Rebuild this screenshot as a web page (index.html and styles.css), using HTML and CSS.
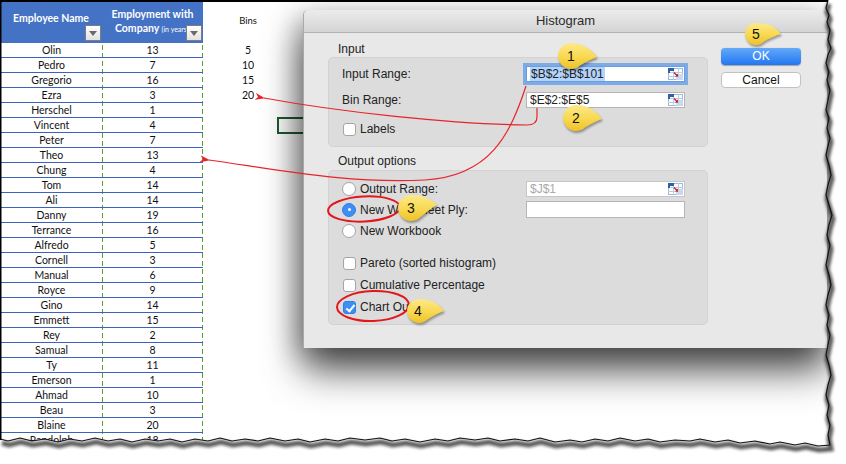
FILE: index.html
```html
<!DOCTYPE html>
<html>
<head>
<meta charset="utf-8">
<link rel="stylesheet" href="styles.css">
</head>
<body>
<div class="shot">
  <div class="sheet">
    <div class="table">
      <div class="thead">
        <div class="th th-name"><span class="hl">Employee Name</span><i class="dd"></i></div>
        <div class="th th-emp"><span class="l1">Employment with</span><span class="l2">Company <small>(in years)</small></span><i class="dd"></i></div>
      </div>
      <div class="tbody">
        <div class="row"><span>Olin</span><span>13</span></div>
        <div class="row"><span>Pedro</span><span>7</span></div>
        <div class="row"><span>Gregorio</span><span>16</span></div>
        <div class="row"><span>Ezra</span><span>3</span></div>
        <div class="row"><span>Herschel</span><span>1</span></div>
        <div class="row"><span>Vincent</span><span>4</span></div>
        <div class="row"><span>Peter</span><span>7</span></div>
        <div class="row"><span>Theo</span><span>13</span></div>
        <div class="row"><span>Chung</span><span>4</span></div>
        <div class="row"><span>Tom</span><span>14</span></div>
        <div class="row"><span>Ali</span><span>14</span></div>
        <div class="row"><span>Danny</span><span>19</span></div>
        <div class="row"><span>Terrance</span><span>16</span></div>
        <div class="row"><span>Alfredo</span><span>5</span></div>
        <div class="row"><span>Cornell</span><span>3</span></div>
        <div class="row"><span>Manual</span><span>6</span></div>
        <div class="row"><span>Royce</span><span>9</span></div>
        <div class="row"><span>Gino</span><span>14</span></div>
        <div class="row"><span>Emmett</span><span>15</span></div>
        <div class="row"><span>Rey</span><span>2</span></div>
        <div class="row"><span>Samual</span><span>8</span></div>
        <div class="row"><span>Ty</span><span>11</span></div>
        <div class="row"><span>Emerson</span><span>1</span></div>
        <div class="row"><span>Ahmad</span><span>10</span></div>
        <div class="row"><span>Beau</span><span>3</span></div>
        <div class="row"><span>Blaine</span><span>20</span></div>
        <div class="row"><span>Randolph</span><span>18</span></div>
      </div>
    </div>
    <div class="bins">
      <div class="cell small">Bins</div>
      <div class="cell"></div>
      <div class="cell">5</div>
      <div class="cell">10</div>
      <div class="cell">15</div>
      <div class="cell">20</div>
    </div>
    <div class="colf"><div class="selcell"></div></div>
  </div>

  <div class="dialog">
    <div class="titlebar">Histogram</div>
    <div class="dbody">
      <div class="dmain">
        <div class="glabel">Input</div>
        <div class="group g-in">
          <div class="frow">
            <span class="lbl">Input Range:</span>
            <div class="field focus"><span class="seltext">$B$2:$B$101</span>
              <svg class="rng" width="15" height="12" viewBox="0 0 15 12"><rect x="0.5" y="0.5" width="14" height="11" fill="#fff" stroke="#9fb8d8"/><path d="M0 4.5H15M0 8.5H15M5.5 0V12M10.5 0V12" stroke="#b9cde6" stroke-width="1"/><rect x="8" y="6" width="7" height="6" fill="#c9daf0"/><rect x="0" y="0" width="6" height="3" fill="#2f5fa8"/><rect x="0" y="0" width="2" height="5" fill="#2f5fa8"/><path d="M6 4.5L9.5 8" stroke="#c3262c" stroke-width="1.4"/><path d="M7 8.6L10.2 8.7L10 5.6Z" fill="#c3262c"/></svg>
            </div>
          </div>
          <div class="frow">
            <span class="lbl">Bin Range:</span>
            <div class="field"><span class="ftext">$E$2:$E$5</span>
              <svg class="rng" width="15" height="12" viewBox="0 0 15 12"><rect x="0.5" y="0.5" width="14" height="11" fill="#fff" stroke="#9fb8d8"/><path d="M0 4.5H15M0 8.5H15M5.5 0V12M10.5 0V12" stroke="#b9cde6" stroke-width="1"/><rect x="8" y="6" width="7" height="6" fill="#c9daf0"/><rect x="0" y="0" width="6" height="3" fill="#2f5fa8"/><rect x="0" y="0" width="2" height="5" fill="#2f5fa8"/><path d="M6 4.5L9.5 8" stroke="#c3262c" stroke-width="1.4"/><path d="M7 8.6L10.2 8.7L10 5.6Z" fill="#c3262c"/></svg>
            </div>
          </div>
          <div class="crow c-labels"><i class="cb"></i><span>Labels</span></div>
        </div>

        <div class="glabel g2">Output options</div>
        <div class="group g-out">
          <div class="frow r1">
            <span class="lbl"><i class="rb"></i>Output Range:</span>
            <div class="field disabled"><span class="ftext">$J$1</span>
              <svg class="rng" width="15" height="12" viewBox="0 0 15 12"><rect x="0.5" y="0.5" width="14" height="11" fill="#fff" stroke="#9fb8d8"/><path d="M0 4.5H15M0 8.5H15M5.5 0V12M10.5 0V12" stroke="#b9cde6" stroke-width="1"/><rect x="8" y="6" width="7" height="6" fill="#c9daf0"/><rect x="0" y="0" width="6" height="3" fill="#2f5fa8"/><rect x="0" y="0" width="2" height="5" fill="#2f5fa8"/><path d="M6 4.5L9.5 8" stroke="#c3262c" stroke-width="1.4"/><path d="M7 8.6L10.2 8.7L10 5.6Z" fill="#c3262c"/></svg>
            </div>
          </div>
          <div class="frow r2">
            <span class="lbl"><i class="rb on"></i>New Worksheet Ply:</span>
            <div class="field tall"></div>
          </div>
          <div class="frow r3">
            <span class="lbl"><i class="rb"></i>New Workbook</span>
          </div>
          <div class="crow r4"><i class="cb"></i><span>Pareto (sorted histogram)</span></div>
          <div class="crow r5"><i class="cb"></i><span>Cumulative Percentage</span></div>
          <div class="crow r6"><i class="cb on"></i><span>Chart Output</span></div>
        </div>
      </div>
      <div class="dbtns">
        <div class="btn ok">OK</div>
        <div class="btn cancel">Cancel</div>
      </div>
    </div>
  </div>

  <svg class="marks" width="846" height="464" viewBox="0 0 846 464">
    <defs>
      <linearGradient id="yel" x1="0" y1="0" x2="0" y2="1">
        <stop offset="0" stop-color="#fde98a"/>
        <stop offset="0.55" stop-color="#f8d84e"/>
        <stop offset="1" stop-color="#eec12a"/>
      </linearGradient>
      <filter id="sh" x="-30%" y="-30%" width="160%" height="160%"><feGaussianBlur stdDeviation="1.2"/></filter>
      <marker id="ah" markerWidth="10" markerHeight="8" refX="1" refY="4" orient="auto-start-reverse" markerUnits="userSpaceOnUse">
        <path d="M0 4L10 0.5L7 4L10 7.5Z" fill="#e8232a"/>
      </marker>
    </defs>
    <path d="M537 108 L537 117 Q537 125 527 125 C450 124 340 112 264 98" fill="none" stroke="#e8232a" stroke-width="1.2" marker-end="url(#ah)"/>
    <path d="M526 86 C510 135 490 176 425 180 C350 184 280 170 209 160" fill="none" stroke="#e8232a" stroke-width="1.2" marker-end="url(#ah)"/>
    <ellipse cx="364" cy="209" rx="36" ry="12.5" transform="rotate(-3 364 209)" fill="none" stroke="#e3161c" stroke-width="2"/>
    <ellipse cx="373" cy="306" rx="36" ry="15" transform="rotate(-2 373 306)" fill="none" stroke="#e3161c" stroke-width="2"/>

    <g class="callout" transform="translate(571 56)">
      <path d="M26 1C20 -7 12 -13 0 -13A13 13 0 1 0 9 9.4C15 6 20 3 26 1Z" fill="#000" opacity="0.35" transform="translate(1 2)" filter="url(#sh)"/>
      <path d="M26 1C20 -7 12 -13 0 -13A13 13 0 1 0 9 9.4C15 6 20 3 26 1Z" fill="url(#yel)"/>
      <text x="0" y="5">1</text>
    </g>
    <g class="callout" transform="translate(576 118)">
      <path d="M26 1C20 -7 12 -13 0 -13A13 13 0 1 0 9 9.4C15 6 20 3 26 1Z" fill="#000" opacity="0.35" transform="translate(1 2)" filter="url(#sh)"/>
      <path d="M26 1C20 -7 12 -13 0 -13A13 13 0 1 0 9 9.4C15 6 20 3 26 1Z" fill="url(#yel)"/>
      <text x="0" y="5">2</text>
    </g>
    <g class="callout" transform="translate(411 208)">
      <path d="M26 -3C20 -9 12 -13 0 -13A13 13 0 1 0 9 9.4C15 5 20 0 26 -3Z" fill="#000" opacity="0.35" transform="translate(1 2)" filter="url(#sh)"/>
      <path d="M26 -3C20 -9 12 -13 0 -13A13 13 0 1 0 9 9.4C15 5 20 0 26 -3Z" fill="url(#yel)"/>
      <text x="0" y="5">3</text>
    </g>
    <g class="callout" transform="translate(419 311)">
      <path d="M25 0C19 -8 12 -12 0 -12A12 12 0 1 0 8.5 8.5C14 5 19 2 25 0Z" fill="#000" opacity="0.35" transform="translate(1 2)" filter="url(#sh)"/>
      <path d="M25 0C19 -8 12 -12 0 -12A12 12 0 1 0 8.5 8.5C14 5 19 2 25 0Z" fill="url(#yel)"/>
      <text x="-1" y="5">4</text>
    </g>
    <g class="callout" transform="translate(756 34)">
      <path d="M25 0C19 -8 12 -11 0 -11A11 11 0 1 0 8 7.5C13 4.5 19 2 25 0Z" fill="#000" opacity="0.35" transform="translate(1 2)" filter="url(#sh)"/>
      <path d="M25 0C19 -8 12 -11 0 -11A11 11 0 1 0 8 7.5C13 4.5 19 2 25 0Z" fill="url(#yel)"/>
      <text x="0" y="5">5</text>
    </g>
  </svg>

  <svg class="torn" width="846" height="464" viewBox="0 0 846 464">
    <defs>
      <filter id="tb" x="-10%" y="-10%" width="120%" height="120%"><feGaussianBlur stdDeviation="1.6"/></filter>
    </defs>
    <path d="M828 0 L826 8 L829 15 L827 22 L830 30 L828 40 L831 48 L828 55 L826 63 L829 72 L827 80 L830 90 L828 100 L826 110 L829 118 L827 128 L830 138 L828 146 L826 155 L829 165 L831 175 L828 185 L826 195 L829 205 L832 215 L829 225 L827 235 L830 245 L828 255 L826 265 L829 275 L831 285 L828 295 L826 305 L829 315 L827 325 L830 335 L828 345 L826 355 L829 365 L831 375 L828 385 L826 395 L829 405 L827 415 L830 425 L828 435 L830 445 L818 446 L805 443 L795 445 L780 442 L770 444 L755 441 L740 443 L728 440 L715 442 L700 439 L690 441 L675 440 L660 442 L648 439 L635 441 L620 438 L608 441 L595 439 L582 442 L570 440 L555 442 L540 438 L528 441 L515 439 L500 441 L488 438 L475 440 L460 438 L448 441 L435 439 L420 442 L405 439 L392 441 L380 438 L365 440 L350 438 L338 441 L325 439 L310 442 L298 439 L285 441 L270 438 L258 441 L245 439 L232 441 L220 438 L208 441 L195 439 L182 442 L170 439 L158 441 L145 439 L132 442 L120 439 L108 441 L95 438 L82 441 L70 439 L58 442 L45 439 L32 441 L20 438 L8 441 L0 439 L0 464 L846 464 L846 0 Z" fill="#fff"/>
    <path d="M829 4 L827 12 L830 19 L828 26 L831 34 L829 44 L832 52 L829 59 L827 67 L830 76 L828 84 L831 94 L829 104 L827 114 L830 122 L828 132 L831 142 L829 150 L827 159 L830 169 L832 179 L829 189 L827 199 L830 209 L833 219 L830 229 L828 239 L831 249 L829 259 L827 269 L830 279 L832 289 L829 299 L827 309 L830 319 L828 329 L831 339 L829 349 L827 359 L830 369 L832 379 L829 389 L827 399 L830 409 L828 419 L831 429 L829 439 L831 449 L819 450 L806 447 L796 449 L781 446 L771 448 L756 445 L741 447 L729 444 L716 446 L701 443 L691 445 L676 444 L661 446 L649 443 L636 445 L621 442 L609 445 L596 443 L583 446 L571 444 L556 446 L541 442 L529 445 L516 443 L501 445 L489 442 L476 444 L461 442 L449 445 L436 443 L421 446 L406 443 L393 445 L381 442 L366 444 L351 442 L339 445 L326 443 L311 446 L299 443 L286 445 L271 442 L259 445 L246 443 L233 445 L221 442 L209 445 L196 443 L183 446 L171 443 L159 445 L146 443 L133 446 L121 443 L109 445 L96 442 L83 445 L71 443 L59 446 L46 443 L33 445 L21 442 L9 445 L2 443" fill="none" stroke="#333" stroke-width="5" opacity="0.8" filter="url(#tb)"/>
    <path d="M828 0 L826 8 L829 15 L827 22 L830 30 L828 40 L831 48 L828 55 L826 63 L829 72 L827 80 L830 90 L828 100 L826 110 L829 118 L827 128 L830 138 L828 146 L826 155 L829 165 L831 175 L828 185 L826 195 L829 205 L832 215 L829 225 L827 235 L830 245 L828 255 L826 265 L829 275 L831 285 L828 295 L826 305 L829 315 L827 325 L830 335 L828 345 L826 355 L829 365 L831 375 L828 385 L826 395 L829 405 L827 415 L830 425 L828 435 L830 445 L818 446 L805 443 L795 445 L780 442 L770 444 L755 441 L740 443 L728 440 L715 442 L700 439 L690 441 L675 440 L660 442 L648 439 L635 441 L620 438 L608 441 L595 439 L582 442 L570 440 L555 442 L540 438 L528 441 L515 439 L500 441 L488 438 L475 440 L460 438 L448 441 L435 439 L420 442 L405 439 L392 441 L380 438 L365 440 L350 438 L338 441 L325 439 L310 442 L298 439 L285 441 L270 438 L258 441 L245 439 L232 441 L220 438 L208 441 L195 439 L182 442 L170 439 L158 441 L145 439 L132 442 L120 439 L108 441 L95 438 L82 441 L70 439 L58 442 L45 439 L32 441 L20 438 L8 441 L0 439" fill="none" stroke="#111" stroke-width="1.2"/>
    <path d="M0 1 H828" stroke="#000" stroke-width="2"/>
    <path d="M0.75 0 V440" stroke="#000" stroke-width="1.5"/>
  </svg>
</div>
</body>
</html>
```

FILE: styles.css
```css
* { box-sizing: border-box; margin: 0; padding: 0; }
html, body { width: 846px; height: 464px; background: #fff; overflow: hidden; }
body { font-family: "Liberation Sans", Arial, sans-serif; }

.shot { position: relative; width: 846px; height: 464px; overflow: hidden; padding: 2px 0 0 1px; }

/* spreadsheet */
.sheet { display: flex; align-items: flex-start; }
.table { width: 202px; font-family: Lato, "Open Sans", sans-serif; }
.thead { display: flex; height: 41px; background: #4472c4; }
.th { position: relative; width: 101px; color: #fff; font-weight: bold; font-size: 10.5px; }
.th-name .hl { display: block; padding: 9px 0 0 12px; line-height: 14px; white-space: nowrap; }
.th-emp .l1 { display: block; text-align: center; padding-top: 5px; line-height: 14px; white-space: nowrap; }
.th-emp .l2 { display: block; padding-left: 13px; line-height: 14px; white-space: nowrap; overflow: hidden; width: 99px; }
.th-emp small { font-size: 7px; font-weight: normal; }
.dd { position: absolute; right: 1px; bottom: 2px; width: 16px; height: 16px; background: linear-gradient(#ffffff, #e2e2e2); border: 1px solid #7d7d7d; }
.dd::after { content: ""; position: absolute; left: 3px; top: 5px; border-left: 4.5px solid transparent; border-right: 4.5px solid transparent; border-top: 5px solid #6a6a6a; }

.tbody {
  background-image: linear-gradient(#5aa02f 5px, transparent 5px), linear-gradient(#5aa02f 5px, transparent 5px);
  background-size: 1px 8px, 1px 8px;
  background-position: 101px 2px, 201px 2px;
  background-repeat: repeat-y, repeat-y;
}
.row { display: flex; height: 15px; border-bottom: 1px solid #3a62be; font-size: 10.5px; line-height: 15px; color: #111; }
.row span { width: 101px; text-align: center; }

.bins { width: 74px; padding: 11px 0 0 16px; font-family: Lato, "Open Sans", sans-serif; font-size: 10.5px; color: #111; }
.bins .cell { height: 15px; line-height: 15px; text-align: center; }
.bins .small { font-size: 9.5px; }
.colf { padding-top: 115px; }
.selcell { width: 30px; height: 17px; border: 2px solid #1e5a30; }

/* dialog */
.dialog {
  position: absolute; left: 303px; top: 10px; width: 524px; height: 338px;
  background: #e8e8e8; border-radius: 5px 5px 0 0; border-left: 1px solid #a9a9a9;
  box-shadow: 0 22px 38px rgba(0,0,0,0.7), -6px 6px 26px rgba(0,0,0,0.22);
  color: #222; font-size: 12px;
}
.titlebar { height: 23px; line-height: 22px; text-align: center; font-size: 13px; color: #2a2a2a; background: linear-gradient(#ececec, #d4d4d4); border-bottom: 1px solid #b3b3b3; border-radius: 5px 5px 0 0; }
.dbody { display: flex; padding-left: 24px; }
.dmain { width: 380px; }
.glabel { height: 24px; padding: 9px 0 0 10px; line-height: 15px; }
.glabel.g2 { height: 23px; padding-top: 7px; }
.group { background: #dcdcdc; border: 1px solid #d2d2d2; border-radius: 5px; }
.g-in { height: 90px; padding-top: 8px; }
.g-out { height: 155px; padding-top: 9px; }

.frow { display: flex; align-items: center; height: 16px; }
.frow + .frow { margin-top: 10px; }
.lbl { width: 197px; padding-left: 13px; display: flex; align-items: center; white-space: nowrap; }
.field { position: relative; width: 159px; height: 16px; background: #fff; border: 1px solid #b5b5b5; display: flex; align-items: center; justify-content: space-between; padding: 0 1px 0 3px; }
.field.focus { box-shadow: 0 0 0 3px #7dabe6; border-color: #6b9be0; }
.field.disabled { border-color: #c6c6c6; color: #a9a9a9; }
.field.tall { height: 17px; }
.seltext { background: #b3d4fc; padding: 0 1px; line-height: 14px; }
.ftext { line-height: 14px; }
.rng { flex: none; }

.crow { display: flex; align-items: center; height: 14px; padding-left: 14px; white-space: nowrap; }
.c-labels { margin-top: 14px; }

.g-out .r1 { height: 17px; }
.g-out .r2 { margin-top: 4px; height: 17px; }
.g-out .r3 { margin-top: 4px; height: 18px; }
.g-out .r4 { margin-top: 15px; height: 16px; }
.g-out .r5 { margin-top: 6px; height: 16px; }
.g-out .r6 { margin-top: 6px; height: 16px; }

.rb { display: inline-block; width: 14px; height: 14px; border-radius: 50%; background: #fff; border: 1px solid #a5a5a5; margin-right: 4px; flex: none; position: relative; }
.rb.on { background: #3d8ef5; border-color: #2f7de8; }
.rb.on::after { content: ""; position: absolute; left: 4.5px; top: 4.5px; width: 3px; height: 3px; border-radius: 50%; background: #fff; }
.cb { display: inline-block; width: 13px; height: 13px; border-radius: 3px; background: #fff; border: 1px solid #a5a5a5; margin-right: 4px; flex: none; position: relative; }
.cb.on { background: #3d8ef5; border-color: #2f7de8; }
.cb.on::after { content: ""; position: absolute; left: 3.5px; top: 1px; width: 3px; height: 7px; border: solid #fff; border-width: 0 2px 2px 0; transform: rotate(40deg); }

.dbtns { margin-left: 13px; padding-top: 15px; display: flex; flex-direction: column; gap: 7px; }
.btn { width: 80px; border-radius: 4px; text-align: center; font-size: 12px; }
.ok { height: 17px; line-height: 17px; color: #fff; background: linear-gradient(#63a9f8, #2277f2); box-shadow: 0 0.5px 1px rgba(0,0,0,0.3); }
.cancel { height: 16px; line-height: 14px; background: #fff; border: 1px solid #c2c2c2; color: #111; }

/* overlays */
.marks { position: absolute; left: 0; top: 0; pointer-events: none; }
.marks text { font-family: "Liberation Sans", Arial, sans-serif; font-size: 14px; fill: #111; text-anchor: middle; }
.torn { position: absolute; left: 0; top: 0; pointer-events: none; }
```
